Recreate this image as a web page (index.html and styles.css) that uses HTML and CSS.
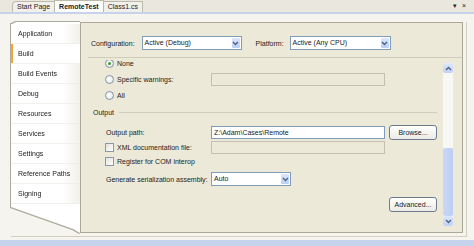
FILE: index.html
```html
<!DOCTYPE html>
<html lang="en">

<head>
  <meta charset="UTF-8">
  <meta name="viewport" content="width=device-width, initial-scale=1.0">
  <title>RemoteTest - Build</title>

  <link rel="stylesheet" href="styles.css">
</head>

<body>
  <div class="ide">
    <div class="doc-tabs">
      <span class="doc-tab doc-tab-first">Start Page</span>
      <span class="doc-tab is-active">RemoteTest</span>
      <span class="doc-tab">Class1.cs</span>
      <span class="tab-tools"><span>&#9662;</span><span>&#215;</span></span>
    </div>

    <div class="doc-body">
      <div class="outline">
        <div class="frame">
          <div class="pages-edge">
            <nav class="pages">
              <div class="page">Application</div>
              <div class="page is-active">Build</div>
              <div class="page">Build Events</div>
              <div class="page">Debug</div>
              <div class="page">Resources</div>
              <div class="page">Services</div>
              <div class="page">Settings</div>
              <div class="page">Reference Paths</div>
              <div class="page">Signing</div>
            </nav>
          </div>

          <section class="panel">
            <div class="config-row">
              <span class="config-label">Configuration:</span>
              <div class="combo combo-config">
                <span class="combo-text">Active (Debug)</span>
                <span class="combo-btn"><svg width="7" height="5" viewBox="0 0 7 5"><path d="M1 1 L3.5 3.5 L6 1" fill="none" stroke="#4d6185" stroke-width="1.4"/></svg></span>
              </div>
              <span class="config-label platform-label">Platform:</span>
              <div class="combo combo-platform">
                <span class="combo-text">Active (Any CPU)</span>
                <span class="combo-btn"><svg width="7" height="5" viewBox="0 0 7 5"><path d="M1 1 L3.5 3.5 L6 1" fill="none" stroke="#4d6185" stroke-width="1.4"/></svg></span>
              </div>
            </div>

            <div class="scroll-area">
              <div class="scroll-view">
                <div class="scroll-content">
                  <div class="row">
                    <span class="choice"><span class="radio is-checked"></span>None</span>
                  </div>
                  <div class="row">
                    <span class="choice"><span class="radio"></span>Specific warnings:</span>
                    <span class="textbox is-disabled"></span>
                  </div>
                  <div class="row">
                    <span class="choice"><span class="radio"></span>All</span>
                  </div>

                  <div class="group-head">
                    <span>Output</span>
                    <span class="group-line"></span>
                  </div>

                  <div class="row row-tall">
                    <span class="field-label">Output path:</span>
                    <span class="textbox">Z:\Adam\Cases\Remote</span>
                    <span class="button">Browse...</span>
                  </div>
                  <div class="row row-short">
                    <span class="choice"><span class="check"></span>XML documentation file:</span>
                    <span class="textbox is-disabled"></span>
                  </div>
                  <div class="row row-short">
                    <span class="choice"><span class="check"></span>Register for COM interop</span>
                  </div>
                  <div class="row row-tall row-gen">
                    <span class="field-label">Generate serialization assembly:</span>
                    <div class="combo combo-gen">
                      <span class="combo-text">Auto</span>
                      <span class="combo-btn"><svg width="7" height="5" viewBox="0 0 7 5"><path d="M1 1 L3.5 3.5 L6 1" fill="none" stroke="#4d6185" stroke-width="1.4"/></svg></span>
                    </div>
                  </div>
                  <div class="row row-actions">
                    <span class="button button-advanced">Advanced...</span>
                  </div>
                </div>
              </div>

              <div class="scrollbar">
                <span class="scroll-btn"><svg width="7" height="5" viewBox="0 0 7 5"><path d="M1 4 L3.5 1.5 L6 4" fill="none" stroke="#4d6185" stroke-width="1.4"/></svg></span>
                <span class="scroll-track"></span>
                <span class="scroll-thumb"></span>
                <span class="scroll-btn"><svg width="7" height="5" viewBox="0 0 7 5"><path d="M1 1 L3.5 3.5 L6 1" fill="none" stroke="#4d6185" stroke-width="1.4"/></svg></span>
              </div>
            </div>
          </section>
        </div>
      </div>
    </div>

    <div class="status-strip"></div>
  </div>
</body>

</html>
```

FILE: styles.css
```css
body {
  margin: 0;
  color: #222;
  font: 7px "Liberation Sans", Arial, sans-serif;
}

.ide {
  background-color: #f5f4ee;
  display: flex;
  flex-direction: column;
  height: 246px;
  overflow: hidden;
  width: 474px;
}

/* document tabs */

.doc-tabs {
  align-items: flex-end;
  background-color: #e9e7de;
  border-bottom: 2px solid #c6d3ea;
  display: flex;
  flex: none;
  height: 12px;
  padding-left: 12px;
}

.doc-tab {
  background-color: #f1f0ea;
  border: 1px solid #bcb9ab;
  border-bottom: none;
  height: 10px;
  line-height: 10px;
  margin-right: -1px;
  padding: 0 4px;
  white-space: nowrap;
}

.doc-tab-first {
  border-top-left-radius: 4px;
}

.doc-tab.is-active {
  background-color: #fdfdfb;
  font-weight: bold;
  height: 11px;
  line-height: 11px;
}

.tab-tools {
  align-self: center;
  display: flex;
  font-size: 7px;
  gap: 5px;
  margin-left: auto;
  padding-right: 8px;
}

/* property page frame */

.doc-body {
  display: flex;
  flex: 1;
  flex-direction: column;
  padding: 8px 7px 3px 11px;
}

.outline {
  border-bottom: 1px solid #d2cfc1;
  border-right: 1px solid #d2cfc1;
  padding: 0 3px 3px 0;
}

.frame {
  display: flex;
  height: 211px;
}

.pages-edge {
  filter: drop-shadow(-1px 0 0 #aeab9c) drop-shadow(0 -1px 0 #aeab9c) drop-shadow(0 1px 0 #aeab9c);
  flex: none;
  width: 69px;
}

.pages {
  background-color: #fff;
  border-top-left-radius: 6px;
  box-sizing: border-box;
  clip-path: polygon(0 0, 100% 0, 100% 100%, 90% calc(100% - 4px), 0 calc(100% - 26px));
  height: 100%;
  padding-top: 2px;
}

.page {
  background: linear-gradient(to right, #fff 75%, #f1f0eb);
  border-bottom: 1px solid #f0efea;
  box-sizing: border-box;
  height: 20px;
  line-height: 19px;
  padding-left: 7px;
  white-space: nowrap;
}

.page.is-active {
  background: #fff;
  box-shadow: inset 2px 0 #f2a53a;
}

.panel {
  background-color: #ece9d8;
  border: 1px solid #aca899;
  display: flex;
  flex: 1;
  flex-direction: column;
  min-width: 0;
}

/* configuration selectors */

.config-row {
  align-items: center;
  border-bottom: 1px solid #d0cdbd;
  display: flex;
  height: 14px;
  margin: 13px 0 0 7px;
  padding: 0 0 7px 3px;
}

.config-label {
  margin-right: 7px;
  white-space: nowrap;
}

.platform-label {
  margin: 0 11px 0 14px;
  width: 23px;
}

.combo {
  background-color: #fff;
  border: 1px solid #7f9db9;
  box-sizing: border-box;
  display: flex;
  flex: none;
  height: 14px;
  justify-content: space-between;
}

.combo-config {
  width: 100px;
}

.combo-platform {
  width: 101px;
}

.combo-gen {
  width: 80px;
}

.combo-text {
  line-height: 12px;
  padding-left: 2px;
  white-space: nowrap;
}

.combo-btn {
  align-items: center;
  background: linear-gradient(#dde7fc, #b9cdf6);
  border: 1px solid #fff;
  border-radius: 2px;
  display: flex;
  justify-content: center;
  width: 8px;
}

/* scrolling options */

.scroll-area {
  display: flex;
  flex: 1;
  margin: 2px 9px 4px 0;
  min-height: 0;
}

.scroll-view {
  flex: 1;
  overflow: hidden;
}

.scroll-content {
  margin-top: -5px;
  padding-right: 6px;
}

.row {
  align-items: center;
  column-gap: 4px;
  display: grid;
  grid-template-columns: 102px 174px 48px;
  height: 16px;
  padding-left: 24px;
}

.row-short {
  height: 14px;
}

.row-tall {
  margin-top: 4px;
}

.row-gen {
  margin-top: 3px;
}

.row-actions {
  height: 15px;
  margin-top: 10px;
}

.choice {
  align-items: center;
  display: flex;
  gap: 2px;
  white-space: nowrap;
}

.field-label {
  padding-left: 1px;
  white-space: nowrap;
}

.radio {
  background: radial-gradient(circle at 40% 40%, #fff, #e2e1da);
  border: 1px solid #8593a8;
  border-radius: 50%;
  box-sizing: border-box;
  flex: none;
  height: 9px;
  margin-right: 1px;
  position: relative;
  width: 9px;
}

.radio.is-checked::after {
  background-color: #3b9b3b;
  border-radius: 50%;
  content: "";
  height: 3px;
  left: 2px;
  position: absolute;
  top: 2px;
  width: 3px;
}

.check {
  background: linear-gradient(135deg, #e3e2db, #fff);
  border: 1px solid #8a98ae;
  box-sizing: border-box;
  flex: none;
  height: 9px;
  margin-right: 1px;
  width: 9px;
}

.textbox {
  background-color: #fff;
  border: 1px solid #7f9db9;
  box-sizing: border-box;
  grid-column: 2;
  height: 13px;
  line-height: 11px;
  padding-left: 2px;
  white-space: nowrap;
}

.textbox.is-disabled {
  background-color: #ece9d8;
  border-color: #c3c0b2;
}

.button {
  background: linear-gradient(#fff, #ecebe6);
  border: 1px solid #6e7b8e;
  border-radius: 3px;
  box-sizing: border-box;
  grid-column: 3;
  height: 15px;
  line-height: 13px;
  text-align: center;
}

.group-head {
  align-items: center;
  display: flex;
  gap: 5px;
  height: 16px;
  margin-top: 1px;
  padding-left: 12px;
}

.group-line {
  border-top: 1px solid #d0cdbd;
  flex: 1;
}

/* scrollbar */

.scrollbar {
  background-color: #f7f7f4;
  display: flex;
  flex-direction: column;
  margin: 3px 0 2px;
  width: 10px;
}

.scroll-btn {
  align-items: center;
  background: linear-gradient(#dde7fc, #c0d1f6);
  border-radius: 2px;
  display: flex;
  height: 10px;
  justify-content: center;
}

.scroll-track {
  flex: 1;
}

.scroll-thumb {
  background: linear-gradient(to right, #c9d8f7, #bccdf3);
  border-radius: 2px;
  height: 68px;
}

.status-strip {
  background-color: #c6d3ec;
  flex: none;
  height: 6px;
}
```
